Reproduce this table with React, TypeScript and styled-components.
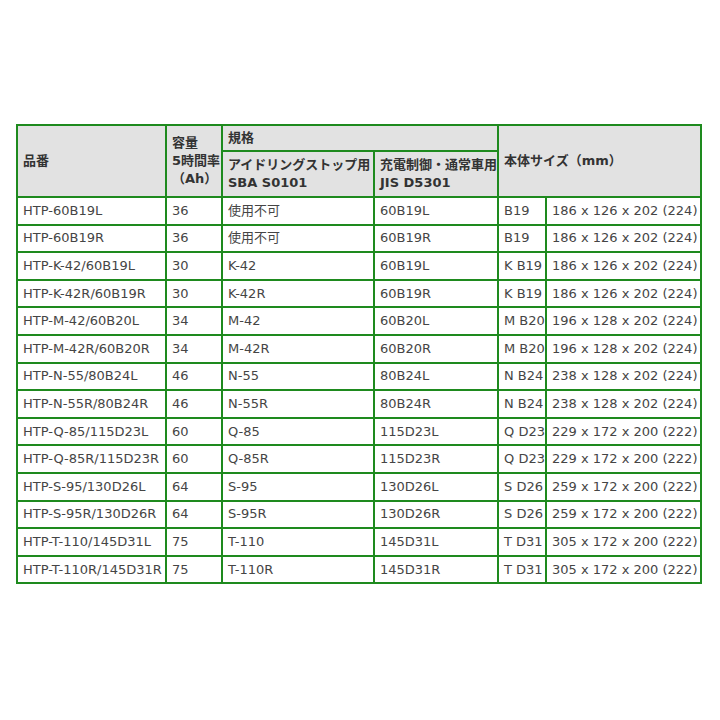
import React from "react"
import styled, {createGlobalStyle} from "styled-components"

const GlobalStyle = createGlobalStyle`
	body{
		margin:0;
		background:#fff;
		font-family:"DejaVu Sans","Noto Sans CJK JP",sans-serif;
	}
`

const Page = styled.div`
	padding:124px 0 0 16px;
`

const Table = styled.table`
	border-collapse:collapse;
	table-layout:fixed;
	width:686px;
	font-size:13px;
	color:#454545;
`

const Th = styled.th<{$valign?:string}>`
	border:2px solid #1e8a1e;
	background:#e2e2e2;
	color:#333;
	font-weight:bold;
	text-align:left;
	vertical-align:${p=>p.$valign||"middle"};
	padding:0 5px;
	line-height:18px;
	white-space:nowrap;
`

const Td = styled.td`
	border:2px solid #1e8a1e;
	padding:0 4px 0 5px;
	white-space:nowrap;
	overflow:hidden;
	line-height:18px;
`

const HeadRowTop = styled.tr`
	height:26px;
`
const HeadRowSub = styled.tr`
	height:46px;
`
const DataRow = styled.tr`
	height:27.6px;
`

interface Battery{
	part: string,
	ah: number,
	sba: string,
	jis: string,
	size: string,
	dims: string
}

const batteries: Battery[] = [
	{part:"HTP-60B19L",ah:36,sba:"使用不可",jis:"60B19L",size:"B19",dims:"186 x 126 x 202 (224)"},
	{part:"HTP-60B19R",ah:36,sba:"使用不可",jis:"60B19R",size:"B19",dims:"186 x 126 x 202 (224)"},
	{part:"HTP-K-42/60B19L",ah:30,sba:"K-42",jis:"60B19L",size:"K B19",dims:"186 x 126 x 202 (224)"},
	{part:"HTP-K-42R/60B19R",ah:30,sba:"K-42R",jis:"60B19R",size:"K B19",dims:"186 x 126 x 202 (224)"},
	{part:"HTP-M-42/60B20L",ah:34,sba:"M-42",jis:"60B20L",size:"M B20",dims:"196 x 128 x 202 (224)"},
	{part:"HTP-M-42R/60B20R",ah:34,sba:"M-42R",jis:"60B20R",size:"M B20",dims:"196 x 128 x 202 (224)"},
	{part:"HTP-N-55/80B24L",ah:46,sba:"N-55",jis:"80B24L",size:"N B24",dims:"238 x 128 x 202 (224)"},
	{part:"HTP-N-55R/80B24R",ah:46,sba:"N-55R",jis:"80B24R",size:"N B24",dims:"238 x 128 x 202 (224)"},
	{part:"HTP-Q-85/115D23L",ah:60,sba:"Q-85",jis:"115D23L",size:"Q D23",dims:"229 x 172 x 200 (222)"},
	{part:"HTP-Q-85R/115D23R",ah:60,sba:"Q-85R",jis:"115D23R",size:"Q D23",dims:"229 x 172 x 200 (222)"},
	{part:"HTP-S-95/130D26L",ah:64,sba:"S-95",jis:"130D26L",size:"S D26",dims:"259 x 172 x 200 (222)"},
	{part:"HTP-S-95R/130D26R",ah:64,sba:"S-95R",jis:"130D26R",size:"S D26",dims:"259 x 172 x 200 (222)"},
	{part:"HTP-T-110/145D31L",ah:75,sba:"T-110",jis:"145D31L",size:"T D31",dims:"305 x 172 x 200 (222)"},
	{part:"HTP-T-110R/145D31R",ah:75,sba:"T-110R",jis:"145D31R",size:"T D31",dims:"305 x 172 x 200 (222)"}
]

export default function App(){
	return <Page>
		<GlobalStyle/>
		<Table>
			<colgroup>
				<col style={{width:149}}/>
				<col style={{width:56}}/>
				<col style={{width:152}}/>
				<col style={{width:124}}/>
				<col style={{width:48}}/>
				<col style={{width:155}}/>
			</colgroup>
			<thead>
				<HeadRowTop>
					<Th rowSpan={2}>品番</Th>
					<Th rowSpan={2}>容量<br/>5時間率<br/>（Ah）</Th>
					<Th colSpan={2}>規格</Th>
					<Th rowSpan={2} colSpan={2}>本体サイズ（mm）</Th>
				</HeadRowTop>
				<HeadRowSub>
					<Th>アイドリングストップ用<br/>SBA S0101</Th>
					<Th>充電制御・通常車用<br/>JIS D5301</Th>
				</HeadRowSub>
			</thead>
			<tbody>
				{batteries.map(b=>
					<DataRow key={b.part}>
						<Td>{b.part}</Td>
						<Td>{b.ah}</Td>
						<Td>{b.sba}</Td>
						<Td>{b.jis}</Td>
						<Td>{b.size}</Td>
						<Td>{b.dims}</Td>
					</DataRow>
				)}
			</tbody>
		</Table>
	</Page>
}
